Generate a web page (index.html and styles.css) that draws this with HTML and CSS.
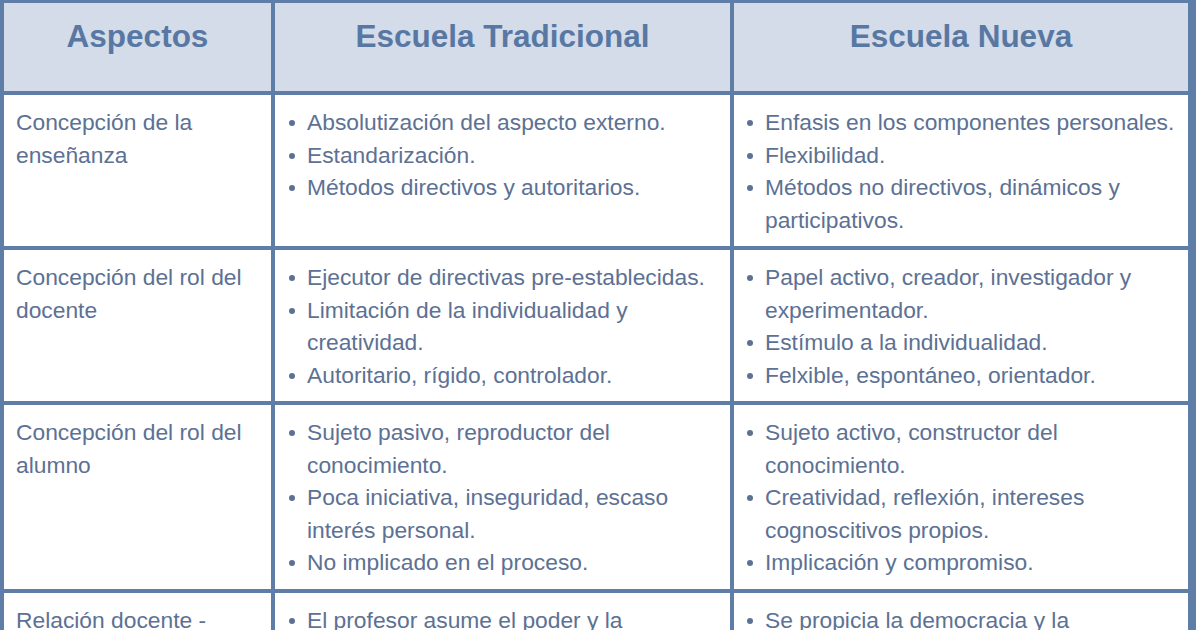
FILE: index.html
```html
<!DOCTYPE html>
<html lang="es">
<head>
<meta charset="utf-8">
<title>Escuela Tradicional vs Escuela Nueva</title>
<link rel="stylesheet" href="styles.css">
</head>
<body>
<div class="page">
  <div class="table">
    <div class="cell head">Aspectos</div>
    <div class="cell head">Escuela Tradicional</div>
    <div class="cell head">Escuela Nueva</div>

    <div class="cell aspect">Concepción de la enseñanza</div>
    <div class="cell">
      <ul class="list">
        <li>Absolutización del aspecto externo.</li>
        <li>Estandarización.</li>
        <li>Métodos directivos y autoritarios.</li>
      </ul>
    </div>
    <div class="cell last">
      <ul class="list">
        <li>Enfasis en los componentes personales.</li>
        <li>Flexibilidad.</li>
        <li>Métodos no directivos, dinámicos y participativos.</li>
      </ul>
    </div>

    <div class="cell aspect">Concepción del rol del docente</div>
    <div class="cell">
      <ul class="list">
        <li>Ejecutor de directivas pre-establecidas.</li>
        <li>Limitación de la individualidad y creatividad.</li>
        <li>Autoritario, rígido, controlador.</li>
      </ul>
    </div>
    <div class="cell last">
      <ul class="list">
        <li>Papel activo, creador, investigador y experimentador.</li>
        <li>Estímulo a la individualidad.</li>
        <li>Felxible, espontáneo, orientador.</li>
      </ul>
    </div>

    <div class="cell aspect">Concepción del rol del alumno</div>
    <div class="cell">
      <ul class="list">
        <li>Sujeto pasivo, reproductor del conocimiento.</li>
        <li>Poca iniciativa, inseguridad, escaso interés personal.</li>
        <li>No implicado en el proceso.</li>
      </ul>
    </div>
    <div class="cell last">
      <ul class="list">
        <li>Sujeto activo, constructor del conocimiento.</li>
        <li>Creatividad, reflexión, intereses cognoscitivos propios.</li>
        <li>Implicación y compromiso.</li>
      </ul>
    </div>

    <div class="cell aspect">Relación docente - alumno</div>
    <div class="cell">
      <ul class="list">
        <li>El profesor asume el poder y la autoridad como transmisor esencial de conocimientos.</li>
      </ul>
    </div>
    <div class="cell last">
      <ul class="list">
        <li>Se propicia la democracia y la comunicación entre docente y alumno.</li>
      </ul>
    </div>
  </div>
  <div class="edge"></div>
</div>
</body>
</html>
```
FILE: styles.css
```css
html, body {
  margin: 0;
  padding: 0;
  background: #ffffff;
  overflow: hidden;
}

.page {
  display: flex;
  width: 1196px;
  height: 630px;
  overflow: hidden;
}

.table {
  width: 1192px;
  flex: none;
  display: grid;
  grid-template-columns: 267px 455px 454px;
  gap: 4px;
  padding: 3px 4px 4px 4px;
  background: #5e7da7;
  align-content: start;
  font-family: "Liberation Sans", Arial, Helvetica, sans-serif;
}

.cell {
  background: #ffffff;
  color: #5c7193;
  font-size: 22.8px;
  line-height: 32.5px;
  padding: 11px 12px 10px 12px;
}

.cell.last {
  padding-left: 11px;
  padding-right: 6px;
}

.cell.aspect {
  padding-left: 12px;
}

.cell.head {
  background: #d3dce8;
  color: #5878a3;
  font-weight: bold;
  font-size: 31.5px;
  line-height: 38px;
  text-align: center;
  padding: 14px 0 36px 0;
}

.list {
  list-style: none;
  margin: 0;
  padding: 0;
}

.list li {
  position: relative;
  padding-left: 20px;
}

.list li::before {
  content: "";
  position: absolute;
  left: 2px;
  top: 14px;
  width: 6px;
  height: 6px;
  border-radius: 50%;
  background: #5c7193;
}

.edge {
  width: 4px;
  flex: none;
  background: linear-gradient(to bottom, #c2b884 0px, #9a9266 60px, #5d5a3e 160px, #4c4a33 630px);
}
```
